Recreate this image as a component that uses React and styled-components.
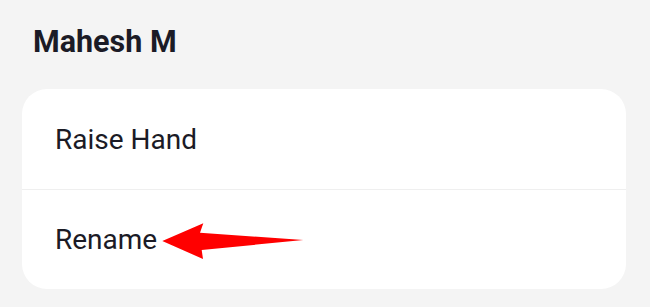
import React from "react";
import styled, { createGlobalStyle } from "styled-components";

const GlobalStyle = createGlobalStyle`
  html, body {
    margin: 0;
    padding: 0;
    background: #f4f4f4;
  }
  body {
    font-family: Roboto, "Liberation Sans", sans-serif;
    color: #1b1b26;
  }
`;

const Page = styled.div`
  width: 650px;
  height: 307px;
  box-sizing: border-box;
  padding: 24px 24px 0 22px;
  background: #f4f4f4;
  overflow: hidden;
`;

const Title = styled.h1`
  margin: 0 0 29px 11px;
  font-size: 30.5px;
  line-height: 36px;
  font-weight: 700;
  color: #1b1b26;
`;

const Card = styled.div`
  background: #fff;
  border-radius: 25px;
  overflow: hidden;
`;

const Row = styled.div`
  display: flex;
  align-items: center;
  height: 100px;
  padding-left: 33px;
  font-size: 28px;
  color: #1b1b26;
  border-top: ${(p) => (p.$divider ? "1px solid #efefef" : "none")};
  box-sizing: border-box;
`;

const Arrow = () => (
  <svg width="146" height="40" viewBox="0 0 146 40" style={{ marginLeft: 3, marginTop: 2 }}>
    <polygon
      points="2.3,20 43.3,2.3 40,11.7 143.3,19 41.7,29 43,38"
      fill="#ff0000"
    />
  </svg>
);

export default function App() {
  return (
    <>
      <GlobalStyle />
      <Page>
        <Title>Mahesh M</Title>
        <Card>
          <Row>Raise Hand</Row>
          <Row $divider>
            <span>Rename</span>
            <Arrow />
          </Row>
        </Card>
      </Page>
    </>
  );
}
